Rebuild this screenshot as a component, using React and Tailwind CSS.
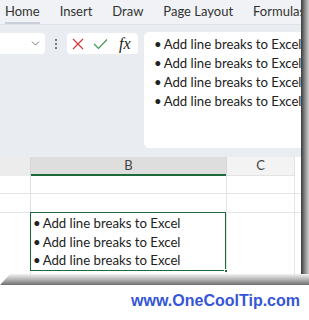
import { ChevronDown } from 'lucide-react';

const LINE = 'Add line breaks to Excel';

function Ribbon() {
  const tabs = ['Home', 'Insert', 'Draw', 'Page Layout', 'Formulas'];
  return (
    <div className="h-[25px] bg-[#f0f2f5] border-b border-[#dfe3e8] flex items-start gap-[20px] pl-[5px] pt-[2px] text-[13px] text-[#333] whitespace-nowrap">
      {tabs.map((t, i) => (
        <div key={t} className="relative leading-[18px]">
          {t}
          {i === 0 && <div className="absolute left-0 right-0 top-[20px] h-[2px] bg-[#c9d0da]" />}
        </div>
      ))}
    </div>
  );
}

function FormulaBar() {
  return (
    <div className="h-[132px] bg-[#e9edf2] flex items-start pt-[7px] gap-[5px]">
      <div className="w-[45px] h-[21px] mt-[1px] bg-white rounded-r-[4px] flex items-center justify-end pr-[3px]">
        <ChevronDown size={13} strokeWidth={1.5} className="text-[#555]" />
      </div>
      <div className="w-[12px] h-[21px] mt-[1px] flex flex-col items-center justify-center gap-[2px]">
        <span className="w-[2px] h-[2px] bg-[#555] rounded-full" />
        <span className="w-[2px] h-[2px] bg-[#555] rounded-full" />
        <span className="w-[2px] h-[2px] bg-[#555] rounded-full" />
      </div>
      <div className="w-[71px] h-[21px] mt-[1px] bg-white rounded-[4px] flex items-center pl-[5px] gap-[9px]">
        <svg width="12" height="12" viewBox="0 0 12 12">
          <path d="M1 1 L11 11 M11 1 L1 11" stroke="#d9383a" strokeWidth="1.2" fill="none" />
        </svg>
        <svg width="15" height="12" viewBox="0 0 15 12">
          <path d="M1 6 L5.5 10.5 L14 1.5" stroke="#3d9a52" strokeWidth="1.2" fill="none" />
        </svg>
        <span className="text-[16px] italic text-[#222] leading-none pl-[2px]" style={{ fontFamily: '"Liberation Serif", serif' }}>fx</span>
      </div>
      <div className="flex-1 h-[116px] bg-white rounded-l-[5px] ml-[1px] pl-[10px] pt-[3px] text-[13.2px] leading-[19px] text-[#222] whitespace-nowrap overflow-hidden">
        {[0, 1, 2, 3].map((i) => (
          <div key={i} className="flex items-center">
            <span className="mr-[2px]">•</span>
            {LINE}
            {i === 3 && <span className="w-px h-[14px] bg-[#222] ml-[1px]" />}
          </div>
        ))}
      </div>
    </div>
  );
}

function Grid() {
  return (
    <div className="flex-1 flex flex-col bg-white text-[#222]">
      <div className="flex h-[19px]">
        <div className="w-[31px] bg-[#ececec] border-r border-[#d6d6d6]" />
        <div className="w-[195px] bg-[#dedede] border-b-2 border-[#1d6b3d] flex items-center justify-center text-[13px] text-[#444]">B</div>
        <div className="w-[68px] bg-[#f3f3f3] border-l border-[#d6d6d6] border-b border-b-[#e2e2e2] flex items-center justify-center text-[13px] text-[#444]">C</div>
        <div className="flex-1 bg-white border-l border-[#e2e2e2]" />
      </div>
      {[18, 19].map((h, i) => (
        <div key={i} className="flex border-b border-[#e4e4e4]" style={{ height: h }}>
          <div className="w-[31px] border-r border-[#e0e0e0]" />
          <div className="w-[195px]" />
          <div className="w-[68px] border-l border-[#e4e4e4]" />
          <div className="flex-1 border-l border-[#e4e4e4]" />
        </div>
      ))}
      <div className="flex flex-1">
        <div className="w-[31px] border-r border-[#e0e0e0]" />
        <div className="relative w-[196px] h-[59px] -ml-[1px] -mt-[1px] border-[1.5px] border-[#1d6b3d] pl-[2px] pt-[1px] text-[13.2px] leading-[18.5px] whitespace-nowrap">
          {[0, 1, 2].map((i) => (
            <div key={i}>
              <span className="mr-[2px]">•</span>
              {LINE}
            </div>
          ))}
          <span className="absolute -right-[3px] -bottom-[3px] w-[4px] h-[4px] bg-[#1d6b3d] border border-white" />
        </div>
        <div className="w-[68px] border-l border-[#e4e4e4]" />
        <div className="flex-1 border-l border-[#e4e4e4]" />
      </div>
    </div>
  );
}

export default function App() {
  return (
    <div className="w-[309px] h-[320px] bg-white flex flex-col overflow-hidden" style={{ fontFamily: 'Lato, sans-serif' }}>
      <div className="flex h-[274px]">
        <div className="w-[301px] flex flex-col overflow-hidden">
          <Ribbon />
          <FormulaBar />
          <Grid />
        </div>
        <div className="flex-1 bg-gradient-to-r from-[#3a3a3a] via-[#8c8c8c] to-[#cfcfcf]" />
      </div>
      <div className="h-[11px] bg-gradient-to-b from-[#f2f2f2] via-[#b5b5b5] to-[#6e6e6e] [clip-path:polygon(0_100%,10px_0,100%_0,100%_100%)]" />
      <div className="flex-1 flex items-center justify-end pr-[9px] pb-[3px]">
        <span className="text-[16px] font-bold text-[#3556d8]" style={{ fontFamily: '"Liberation Sans", Arial, sans-serif' }}>
          www.OneCoolTip.com
        </span>
      </div>
    </div>
  );
}
